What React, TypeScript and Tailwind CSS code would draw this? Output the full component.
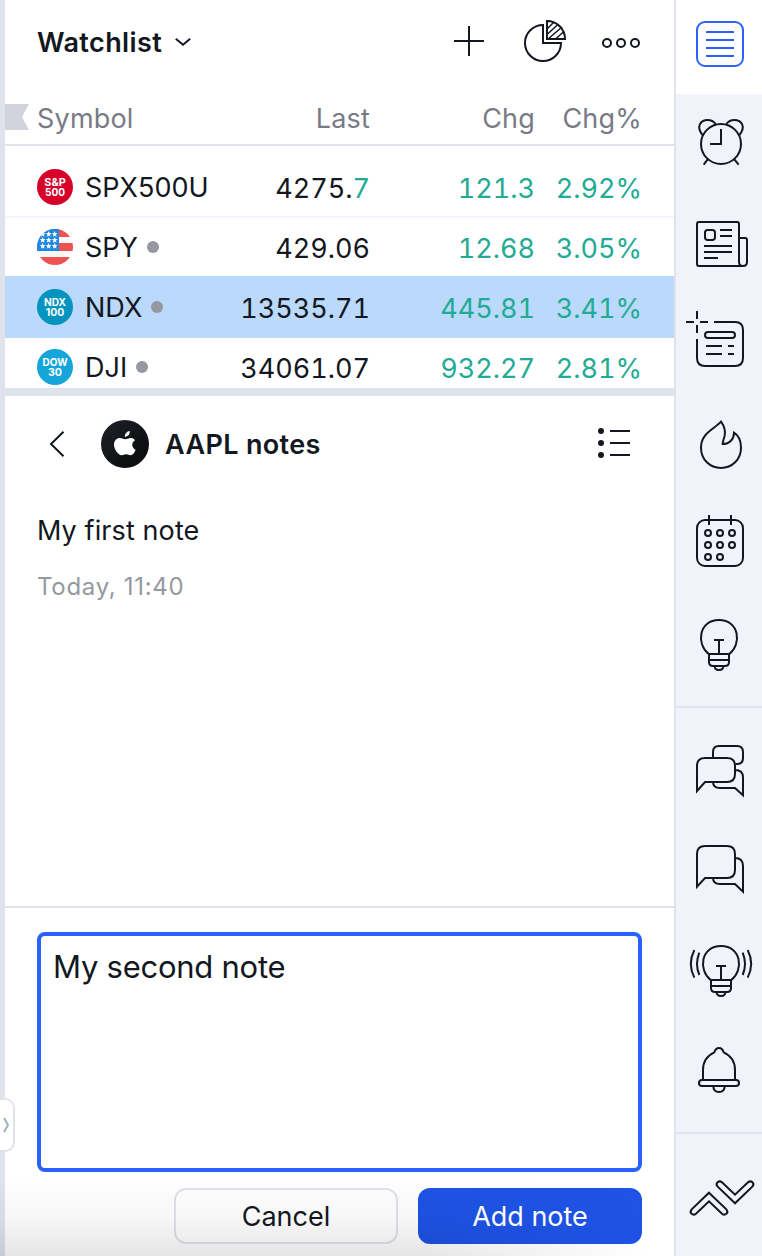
import type { ReactNode } from "react";

type Quote = {
  symbol: string;
  last: ReactNode;
  chg: string;
  pct: string;
  logo: ReactNode;
  dot: boolean;
  row: string;
};

function TextLogo({ top, bottom, color, topWidth, bottomWidth }: { top: string; bottom: string; color: string; topWidth: number; bottomWidth: number }) {
  return (
    <svg className="size-9 shrink-0" viewBox="0 0 36 36" fontFamily="Inter, sans-serif" fontWeight="700" fontSize="10.3" fill="#fff" textAnchor="middle">
      <circle cx="18" cy="18" r="18" fill={color} />
      <text x="18" y="17.300" textLength={topWidth} lengthAdjust="spacingAndGlyphs">{top}</text>
      <text x="18" y="27.200" textLength={bottomWidth} lengthAdjust="spacingAndGlyphs">{bottom}</text>
    </svg>
  );
}

const STARS = [
  [11.7, 5], [17.7, 5],
  [5.7, 11], [11.7, 11], [17.7, 11],
  [5.7, 17], [11.7, 17], [17.7, 17],
  [5.7, 5],
];

function FlagLogo() {
  return (
    <svg className="size-9 shrink-0 rounded-full" viewBox="0 0 36 36">
      <path fill="#f7f8fa" d="M0 0h36v36H0z" />
      <path fill="#ef5350" d="M0 0h36v8H0zM0 14h36v8H0zM0 28h36v8H0z" />
      <path fill="#1e88e5" d="M0 0h22v22H0z" />
      {STARS.map(([x, y]) => (
        <path
          key={`${x}-${y}`}
          transform={`translate(${x} ${y})`}
          fill="#fff"
          d="M0-2.9.8-.9 2.9-.8 1.3.6 1.8 2.7 0 1.5-1.8 2.7-1.3.6-2.9-.8-.8-.9z"
        />
      ))}
    </svg>
  );
}

const QUOTES: Quote[] = [
  {
    symbol: "SPX500U",
    last: <>4275.<span className="text-[#22ab94]">7</span></>,
    chg: "121.3",
    pct: "2.92%",
    logo: <TextLogo top="S&P" bottom="500" color="#d6002a" topWidth={21.5} bottomWidth={20} />,
    dot: false,
    row: "h-[60px] border-b-2 border-[#f0f3fa]",
  },
  { symbol: "SPY", last: "429.06", chg: "12.68", pct: "3.05%", logo: <FlagLogo />, dot: true, row: "h-[58px]" },
  {
    symbol: "NDX",
    last: "13535.71",
    chg: "445.81",
    pct: "3.41%",
    logo: <TextLogo top="NDX" bottom="100" color="#0294be" topWidth={22} bottomWidth={18.500} />,
    dot: true,
    row: "h-[62px] bg-[#bbd9fb]",
  },
  {
    symbol: "DJI",
    last: "34061.07",
    chg: "932.27",
    pct: "2.81%",
    logo: <TextLogo top="DOW" bottom="30" color="#16a5da" topWidth={25} bottomWidth={14} />,
    dot: true,
    row: "h-[58px]",
  },
];

function QuoteRow({ q }: { q: Quote }) {
  return (
    <div className={`flex shrink-0 items-center pr-8 pl-8 ${q.row}`}>
      {q.logo}
      <div className="ml-3 flex w-[122px] shrink-0 items-center overflow-hidden">
        <span className="pt-0.5 text-[27px] leading-9">{q.symbol}</span>
        {q.dot && <span className="ml-[9px] size-3 shrink-0 rounded-full bg-[#9598a1]" />}
      </div>
      <div className="mr-px flex flex-1 pt-1 text-right text-[27px] leading-9 tabular-nums">
        <span className="flex-1">{q.last}</span>
        <span className="w-[165px] text-[#22ab94]">{q.chg}</span>
        <span className="-mr-px w-[107px] text-[#22ab94]">{q.pct}</span>
      </div>
    </div>
  );
}

function Watchlist() {
  return (
    <section className="flex h-[388px] shrink-0 flex-col overflow-hidden">
      <header className="flex h-[84px] shrink-0 items-center pl-8">
        <h2 className="w-[138px] pt-0.5 text-[27px] leading-9 font-semibold tracking-[0.4px]">Watchlist</h2>
        <svg className="h-2.5 w-4" viewBox="0 0 16 10" fill="none" stroke="currentColor" strokeWidth="2">
          <path d="M.8 1.700 8 7.700l7.200-6" />
        </svg>
        <svg className="mb-0.5 ml-auto size-[30px]" viewBox="0 0 30 30" stroke="currentColor" strokeWidth="2">
          <path d="M15 0v30M0 15h30" />
        </svg>
        <svg className="mb-0.5 ml-10 h-[42px] w-[42px]" viewBox="0 0 42 42" fill="none" stroke="currentColor" strokeWidth="2">
          <path d="M19 5a18 18 0 1 0 18 18H19z" />
          <path d="M23 1v18h18A18 18 0 0 0 23 1z" />
          <path strokeWidth="1.500" d="m23 9 7-7M23 14.500 34.500 4M24 19 38 7M31.500 19l8.500-7.500" />
        </svg>
        <svg className="mt-0.5 mr-[34px] ml-9 h-2.5 w-[38px]" viewBox="0 0 38 10" fill="none" stroke="currentColor" strokeWidth="2">
          <circle cx="5" cy="5" r="4" />
          <circle cx="19" cy="5" r="4" />
          <circle cx="33" cy="5" r="4" />
        </svg>
      </header>
      <div className="flex h-[62px] shrink-0 items-center border-b-2 border-[#e0e3eb] pr-8 text-[27px] tracking-[0.2px] text-[#787b86]">
        <svg className="mt-1.5 h-[26px] w-6" viewBox="0 0 24 26" fill="#d1d4dc">
          <path d="M0 0h24l-7 13 7 13H0z" />
        </svg>
        <span className="mt-2.5 ml-2 w-[170px]">Symbol</span>
        <div className="mt-2.5 mr-px flex flex-1 text-right">
          <span className="flex-1">Last</span>
          <span className="w-[165px]">Chg</span>
          <span className="-mr-px w-[107px]">Chg%</span>
        </div>
      </div>
      <div className="flex flex-col pt-3">
        {QUOTES.map((q) => <QuoteRow key={q.symbol} q={q} />)}
      </div>
    </section>
  );
}

function Notes() {
  return (
    <section className="flex flex-1 flex-col border-t-8 border-[#e0e3eb]">
      <header className="flex h-24 items-center pr-11 pl-11">
        <svg className="h-[26px] w-4" viewBox="0 0 16 26" fill="none" stroke="currentColor" strokeWidth="2">
          <path d="M14.500.800 2 13l12.500 12.200" />
        </svg>
        <svg className="ml-9 size-12" viewBox="0 0 48 48">
          <defs>
            <linearGradient id="apple" x1="0" y1="0" x2="1" y2="1">
              <stop stopColor="#1d2227" />
              <stop offset="1" stopColor="#08090b" />
            </linearGradient>
          </defs>
          <circle cx="24" cy="24" r="24" fill="url(#apple)" />
          <path fill="#fff" d="M28.800 11c.2 3.300-2.200 5.800-5 5.800-.3-3 2.300-5.500 5-5.800zM34 20.300c-4 2.400-3.400 7.800.6 9.400-1 2.600-2.900 5.500-4.900 5.500-1.700 0-2.400-1-4.500-1s-2.800 1-4.500 1C17.200 35.200 13 29.200 13 24.700c0-4.300 2.800-6.700 5.900-6.700 2.300 0 3.800 1.300 5.500 1.300 1.600 0 3.100-1.300 5.500-1.300 1.600 0 3.200.8 4.100 2.300z" />
        </svg>
        <h2 className="ml-4 pt-0.5 text-[27px] leading-9 font-semibold tracking-[0.35px]">AAPL notes</h2>
        <svg className="mb-0.5 ml-auto h-[30px] w-8" viewBox="0 0 32 30" stroke="currentColor" strokeWidth="2">
          <path d="M12 3h20M12 15h20M12 27h20" />
          <g stroke="none" fill="currentColor">
            <circle cx="3" cy="3" r="3" />
            <circle cx="3" cy="15" r="3" />
            <circle cx="3" cy="27" r="3" />
          </g>
        </svg>
      </header>
      <article className="flex-1 pt-[21px] pl-8">
        <p className="text-[27px] leading-9 tracking-[0.1px]">My first note</p>
        <p className="mt-[22px] text-2xl leading-8 tracking-[0.7px] text-[#9598a1]">Today, 11:40</p>
      </article>
      <form className="flex h-[350px] flex-col border-t-2 border-[#e0e3eb] px-8 pt-6">
        <textarea
          className="h-60 shrink-0 resize-none rounded-lg border-4 border-[#2962ff] bg-white px-3 pt-3 text-[31px] leading-[38px] tracking-[-0.25px] outline-none"
          defaultValue="My second note"
        />
        <div className="mt-4 flex justify-end gap-5 text-[27px]">
          <button type="button" className="h-14 w-56 rounded-xl border-2 border-[#e0e3eb] pt-0.5">Cancel</button>
          <button type="button" className="h-14 w-56 rounded-xl bg-[#1e53e5] pt-0.5 text-white">Add note</button>
        </div>
      </form>
    </section>
  );
}

function Tool({ label, box, y, h, active, children }: { label: string; box: string; y: number; h: number; active?: boolean; children: ReactNode }) {
  return (
    <button type="button" aria-label={label} className={`block w-[86px] shrink-0 ${box} ${active ? "bg-white text-[#2962ff]" : ""}`}>
      <svg className="size-full" viewBox={`12 ${y} 258 ${h}`} fill="none" stroke="currentColor" strokeWidth="6">
        {children}
      </svg>
    </button>
  );
}

function Bulb() {
  return (
    <>
      <path d="M110 222C72 192 80 120 141 120s69 72 31 102z" />
      <path d="M126 180h30M141 180v42M111 222v24q0 12 12 12h36q12 0 12-12v-24M111 240h60M128 259c0 8 4 11 13 11s13-3 13-11" />
    </>
  );
}

function Toolbar() {
  return (
    <aside className="flex w-[88px] shrink-0 flex-col border-l-2 border-[#e0e3eb] bg-[#f0f3fa]">
      <Tool label="watchlist" box="h-[94px]" y={0} h={282} active>
        <rect x="75" y="66" width="138" height="132" rx="24" />
        <path d="M102 96h84M102 120h84M102 144h84M102 168h84" />
      </Tool>
      <Tool label="alerts" box="h-[100px]" y={282} h={300}>
        <circle cx="147" cy="432" r="60" />
        <path d="M147 387v45h-33M107 478l-12 16M187 478l13 16M93 407C70 380 86 360 107 360q15 0 24 12M201 407c23-27 7-47-14-47q-15 0-24 12" />
      </Tool>
      <Tool label="news" box="h-[100px]" y={582} h={300}>
        <path d="M201 786V672q0-6-6-6H81q-6 0-6 6v120q0 6 6 6h132M201 714h18q6 0 6 6v66q0 12-12 12t-12-12" />
        <rect x="99" y="690" width="30" height="30" rx="8" />
        <path d="M144 690h36M144 708h36M96 738h84M96 756h84M96 774h42" />
      </Tool>
      <Tool label="data window" box="h-[100px]" y={42} h={300}>
        <path d="M75 93v24M75 135v24M42 126h24M84 126h24M126 126h63q24 0 24 24v84q0 24-24 24H99q-24 0-24-24v-57" />
        <rect x="99" y="156" width="90" height="18" rx="9" />
        <path d="M102 198h48M168 198h18M102 222h48M168 222h18" />
      </Tool>
      <Tool label="hotlists" box="h-[100px]" y={342} h={300}>
        <path d="M147 425c11 15 14 27 11 42-3 11-6 18-6 25 21 0 34-15 34-34 13 8 21 26 21 45 0 36-27 61-60 61s-60-25-60-61c0-44 39-55 60-78z" />
      </Tool>
      <Tool label="calendar" box="h-[100px]" y={642} h={300}>
        <rect x="75" y="720" width="138" height="138" rx="24" />
        <path d="M111 705v30M177 705v30" />
        {[[108, 759], [144, 759], [180, 759], [108, 795], [144, 795], [180, 795], [108, 831], [144, 831]].map(([cx, cy]) => (
          <circle key={`${cx}-${cy}`} cx={cx} cy={cy} r="9" />
        ))}
      </Tool>
      <Tool label="ideas" box="h-[112px]" y={42} h={336}>
        <Bulb />
      </Tool>
      <div className="h-0.5 shrink-0 bg-[#e0e3eb]" />
      <Tool label="public chats" box="h-[100px]" y={384} h={300}>
        <path d="M123 534v-18q0-18 18-18h54q18 0 18 18v18q0 18-18 18h-5" />
        <path d="M75 633v-75q0-24 24-24h66q24 0 24 24v24q0 24-24 24H99zM189 570q24 0 24 22v54l-24-22h-45q-21 0-21-18" />
      </Tool>
      <Tool label="private chats" box="h-[112px]" y={684} h={336}>
        <path d="M75 920V822q0-24 24-24h66q24 0 24 24v48q0 24-24 24H99zM189 834q24 0 24 24v77l-24-23h-45q-21 0-21-18" />
      </Tool>
      <Tool label="ideas stream" box="h-[100px]" y={30} h={300}>
        <g transform="translate(6 -12)"><Bulb /></g>
        <path d="M67 120q-21 41 0 83M82 128q-14 34 0 67M227 120q21 41 0 83M212 128q14 34 0 67" />
      </Tool>
      <Tool label="notifications" box="h-[112px]" y={330} h={336}>
        <path d="M93 510v-30c0-28 12-43 34-53 3-10 6-13 14-13s11 3 14 13c22 10 34 25 34 53v30" />
        <rect x="81" y="510" width="120" height="18" rx="9" />
        <path d="M124 529c0 11 7 17 17 17s17-6 17-17" />
      </Tool>
      <div className="h-0.5 shrink-0 bg-[#e0e3eb]" />
      <Tool label="order panel" box="h-[122px]" y={672} h={366}>
        <path d="m111 848 52 50c9 11-4 20-13 13l-39-37-39 37c-9 7-22-2-13-13zM189 880l-52-50c-9-11 4-20 13-13l39 37 39-37c9-7 22 2 13 13z" />
      </Tool>
    </aside>
  );
}

export default function App() {
  return (
    <div className="relative flex h-[1256px] w-[762px] overflow-hidden bg-white font-['Inter',sans-serif] text-[#131722]">
      <main className="flex min-w-0 flex-1 flex-col border-l-[5px] border-[#e0e3eb]">
        <Watchlist />
        <Notes />
      </main>
      <Toolbar />
      <div className="absolute top-[1098px] -left-3 flex h-[54px] w-[27px] items-center justify-end rounded-[10px] border-2 border-[#e0e3eb] bg-white pr-1">
        <svg className="h-4 w-1.5" viewBox="0 0 6 16" fill="none" stroke="#9db2bd" strokeWidth="2">
          <path d="m1 1 4 7-4 7" />
        </svg>
      </div>
      <div className="pointer-events-none absolute bottom-0 left-0 h-20 w-[650px] bg-linear-to-b from-transparent via-black/3 to-black/10 mask-r-from-65%" />
    </div>
  );
}
